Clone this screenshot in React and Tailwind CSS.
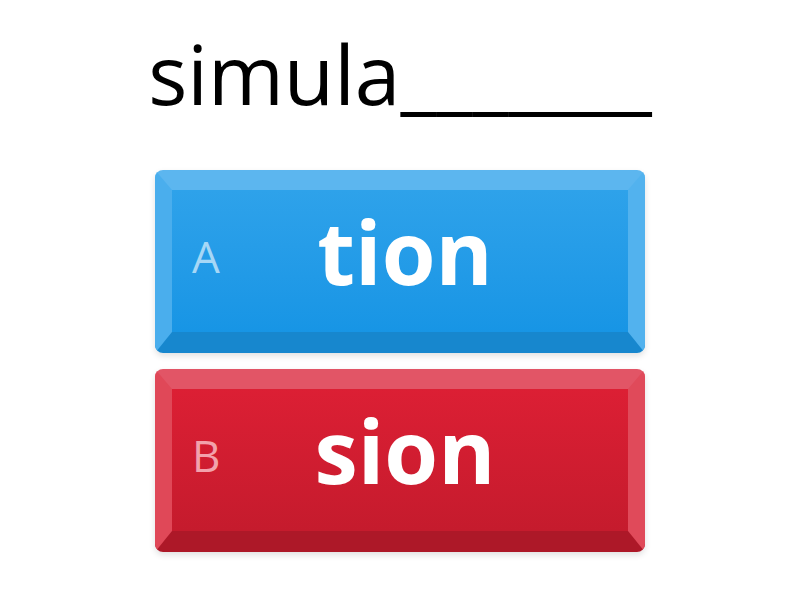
const options = [
  {
    letter: 'A',
    text: 'tion',
    frame: 'border-t-[#5cb6ef] border-l-[#4aaeed] border-r-[#52b2ee] border-b-[#1787ce]',
    face: 'bg-gradient-to-b from-[#2ea2ea] to-[#1795e5]',
    label: 'text-[#a6d7f6]',
  },
  {
    letter: 'B',
    text: 'sion',
    frame: 'border-t-[#e25566] border-l-[#e04858] border-r-[#e04a5a] border-b-[#ad1828]',
    face: 'bg-gradient-to-b from-[#dc1f34] to-[#c51b2d]',
    label: 'text-[#f2a2ac]',
  },
];

const AnswerKey = ({ option }) => (
  <button
    className={`relative block w-[490px] h-[183px] rounded-lg border-solid border-t-[20px] border-b-[21px] border-l-[17px] border-r-[17px] shadow-[0_3px_6px_rgba(0,0,0,0.12)] ${option.frame}`}
  >
    <div className={`relative flex h-full w-full items-center justify-center ${option.face}`}>
      <span className={`absolute left-[20px] top-[44px] text-[44px] leading-none ${option.label}`}>
        {option.letter}
      </span>
      <span className="pl-[10px] pb-[20px] text-[87px] font-bold leading-none text-white">
        {option.text}
      </span>
    </div>
  </button>
);

export default function App() {
  return (
    <div className="flex h-[600px] w-[800px] flex-col items-center bg-white font-['Open_Sans',sans-serif]">
      <h1 className="pt-[32px] text-[82px] font-normal leading-none text-black">simula_______</h1>
      <div className="mt-[56px] flex flex-col gap-[16px]">
        {options.map((o) => (
          <AnswerKey key={o.letter} option={o} />
        ))}
      </div>
    </div>
  );
}
